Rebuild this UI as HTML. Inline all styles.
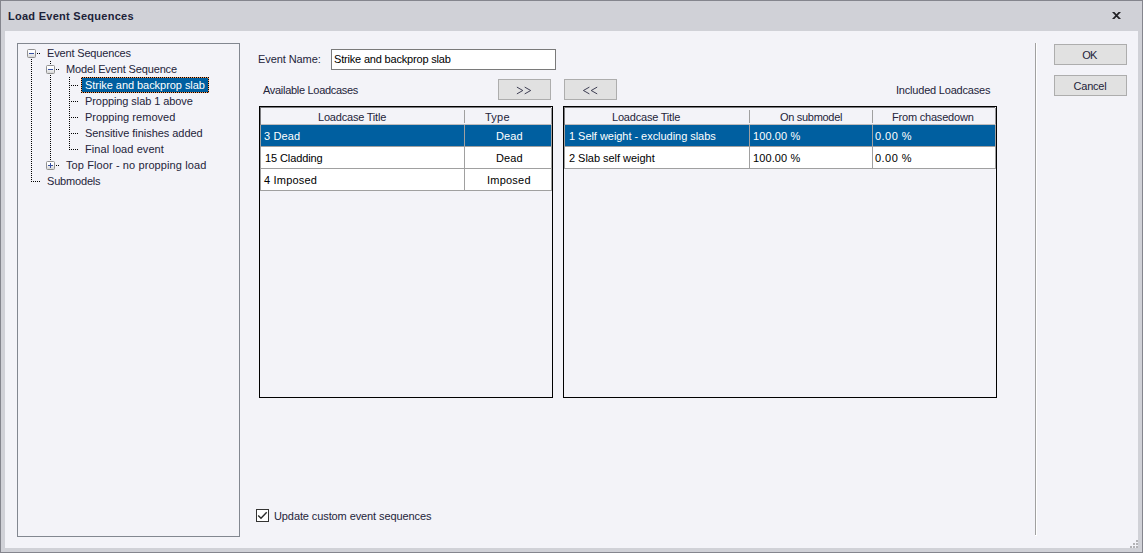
<!DOCTYPE html>
<html>
<head>
<meta charset="utf-8">
<title>Load Event Sequences</title>
<style>
html,body{margin:0;padding:0;}
body{width:1143px;height:553px;overflow:hidden;background:#d0d1d7;position:relative;
  font-family:"Liberation Sans",sans-serif;font-size:11px;line-height:13px;color:#24243a;}
.abs{position:absolute;}
#frame{left:0;top:0;width:1141px;height:551px;border:1px solid #84858d;}
#content{left:5px;top:31px;width:1133px;height:517px;background:#f3f3f8;}
.t{position:absolute;white-space:pre;line-height:13px;height:13px;}
#title{left:8px;top:10px;font-weight:bold;font-size:11px;line-height:13px;height:13px;color:#1c2238;letter-spacing:0.27px;}
#tree{left:17px;top:43px;width:221px;height:492px;border:1px solid #828790;}
.btn{position:absolute;box-sizing:border-box;background:#e1e1e1;border:1px solid #adadad;text-align:center;}
.sel{position:absolute;background:#005fa0;}
.w{color:#fff;}
.hl{position:absolute;height:1px;background:#a0a0a0;}
.vl{position:absolute;width:1px;background:#a0a0a0;}
.row{position:absolute;background:#fff;}
.dv{position:absolute;width:1px;background-image:linear-gradient(to bottom,#000 50%,rgba(0,0,0,0) 50%);background-size:1px 2px;}
.dh{position:absolute;height:1px;background-image:linear-gradient(to right,#000 50%,rgba(0,0,0,0) 50%);background-size:2px 1px;}
.xb{position:absolute;width:7px;height:7px;border:1px solid #919191;border-radius:1.5px;background:linear-gradient(#ffffff 30%,#d6d6d6);}
.xb i{position:absolute;left:1px;top:3px;width:5px;height:1px;background:#3650a2;}
.xb b{position:absolute;left:3px;top:1px;width:1px;height:5px;background:#3650a2;}
</style>
</head>
<body>
<div class="abs" id="frame"></div>
<div class="abs" id="content"></div>

<!-- title bar -->
<div class="t" id="title">Load Event Sequences</div>
<svg class="abs" style="left:1111px;top:11px" width="11" height="10" viewBox="0 0 11 10"><path d="M1 1 L3.4 1 L10 8 L7.6 8 Z M7.6 1 L10 1 L3.4 8 L1 8 Z" fill="#222226"/></svg>

<!-- tree -->
<div class="abs" id="tree"></div>
<!-- dotted connectors -->
<div class="dv" style="left:31px;top:59px;height:123px"></div>
<div class="dh" style="left:37px;top:53px;width:4px"></div>
<div class="dh" style="left:31px;top:181px;width:10px"></div>
<div class="dv" style="left:50px;top:61px;height:4px"></div>
<div class="dv" style="left:50px;top:75px;height:86px"></div>
<div class="dh" style="left:56px;top:69px;width:4px"></div>
<div class="dh" style="left:56px;top:165px;width:4px"></div>
<div class="dv" style="left:69px;top:77px;height:73px"></div>
<div class="dh" style="left:71px;top:85px;width:8px"></div>
<div class="dh" style="left:71px;top:101px;width:8px"></div>
<div class="dh" style="left:71px;top:117px;width:8px"></div>
<div class="dh" style="left:71px;top:133px;width:8px"></div>
<div class="dh" style="left:71px;top:149px;width:8px"></div>
<!-- expand boxes -->
<div class="xb" style="left:27px;top:49px"><i></i></div>
<div class="xb" style="left:46px;top:65px"><i></i></div>
<div class="xb" style="left:46px;top:161px"><i></i><b></b></div>
<!-- selection -->
<div class="sel" style="left:81px;top:77px;width:128px;height:16px;background:repeating-linear-gradient(90deg,#ff9f5f 0 1px,#000 1px 2px) 0 0/100% 1px no-repeat,repeating-linear-gradient(90deg,#000 0 1px,#ff9f5f 1px 2px) 0 100%/100% 1px no-repeat,repeating-linear-gradient(180deg,#ff9f5f 0 1px,#000 1px 2px) 0 0/1px 100% no-repeat,repeating-linear-gradient(180deg,#000 0 1px,#ff9f5f 1px 2px) 100% 0/1px 100% no-repeat,#005fa0"></div>
<!-- tree text -->
<div class="t" style="left:47px;top:47px;letter-spacing:-0.16px">Event Sequences</div>
<div class="t" style="left:66px;top:63px;letter-spacing:-0.14px">Model Event Sequence</div>
<div class="t w" style="left:85px;top:79px;letter-spacing:-0.05px">Strike and backprop slab</div>
<div class="t" style="left:85px;top:95px;letter-spacing:-0.08px">Propping slab 1 above</div>
<div class="t" style="left:85px;top:111px;letter-spacing:0.03px">Propping removed</div>
<div class="t" style="left:85px;top:127px;letter-spacing:-0.04px">Sensitive finishes added</div>
<div class="t" style="left:85px;top:143px;letter-spacing:0.08px">Final load event</div>
<div class="t" style="left:66px;top:159px;letter-spacing:0.1px">Top Floor - no propping load</div>
<div class="t" style="left:47px;top:175px;letter-spacing:-0.18px">Submodels</div>

<!-- event name -->
<div class="t" style="left:258px;top:53px;letter-spacing:-0.08px">Event Name:</div>
<div class="abs" style="left:331px;top:49px;width:223px;height:19px;border:1px solid #7a7a7a;background:#fff"></div>
<div class="t" style="color:#000;left:334px;top:53px;letter-spacing:-0.18px">Strike and backprop slab</div>

<!-- labels + arrow buttons -->
<div class="t" style="left:263px;top:84px;letter-spacing:-0.3px">Available Loadcases</div>
<div class="t" style="left:896px;top:84px;letter-spacing:-0.2px">Included Loadcases</div>
<div class="btn" style="left:498px;top:79px;width:53px;height:21px"></div>
<svg class="abs" style="left:510px;top:82px" width="30" height="17" viewBox="510 82 30 17"><path d="M516.9 87.1 L522.8 90.5 L516.9 93.9 M524.7 87.1 L530.7 90.5 L524.7 93.9" stroke="#2c2c44" stroke-width="0.9" fill="none"/></svg>
<div class="btn" style="left:564px;top:79px;width:53px;height:21px"></div>
<svg class="abs" style="left:576px;top:82px" width="30" height="17" viewBox="576 82 30 17"><path d="M589.4 87.1 L583.4 90.5 L589.4 93.9 M597.2 87.1 L591.2 90.5 L597.2 93.9" stroke="#2c2c44" stroke-width="0.9" fill="none"/></svg>

<!-- table 1 -->
<div class="abs" style="left:259px;top:106px;width:292px;height:290px;border:1px solid #000"></div>
<div class="abs" style="left:260px;top:107px;width:291px;height:1px;background:#7c7c80"></div>
<div class="abs" style="left:260px;top:107px;width:1px;height:18px;background:#7c7c80"></div>
<div class="abs" style="left:260px;top:125px;width:1px;height:66px;background:#a0a0a0"></div>
<div class="abs" style="left:551px;top:108px;width:1px;height:17px;background:#9c9ca0"></div>
<div class="hl" style="left:261px;top:124px;width:291px;background:#c0bcbc"></div>
<div class="vl" style="left:464px;top:110px;height:13px"></div>
<div class="row" style="left:261px;top:125px;width:290px;height:65px"></div>
<div class="sel" style="left:261px;top:125px;width:290px;height:21px"></div>
<div class="hl" style="left:261px;top:146px;width:291px"></div>
<div class="hl" style="left:261px;top:168px;width:291px"></div>
<div class="hl" style="left:261px;top:190px;width:291px"></div>
<div class="vl" style="left:464px;top:125px;height:66px"></div>
<div class="vl" style="left:551px;top:125px;height:66px"></div>
<div class="t" style="left:318px;top:111px;letter-spacing:-0.2px">Loadcase Title</div>
<div class="t" style="left:485px;top:111px;letter-spacing:0.25px">Type</div>
<div class="t w" style="left:264px;top:130px;letter-spacing:0.15px">3 Dead</div>
<div class="t" style="color:#000;left:265px;top:152px;letter-spacing:-0.1px">15 Cladding</div>
<div class="t" style="color:#000;left:264px;top:174px;letter-spacing:0.2px">4 Imposed</div>
<div class="t w" style="left:496px;top:130px;letter-spacing:0.1px">Dead</div>
<div class="t" style="color:#000;left:496px;top:152px;letter-spacing:0.1px">Dead</div>
<div class="t" style="color:#000;left:487px;top:174px;letter-spacing:0.22px">Imposed</div>

<!-- table 2 -->
<div class="abs" style="left:563px;top:106px;width:432px;height:290px;border:1px solid #000"></div>
<div class="abs" style="left:564px;top:107px;width:431px;height:1px;background:#7c7c80"></div>
<div class="abs" style="left:564px;top:107px;width:1px;height:18px;background:#7c7c80"></div>
<div class="abs" style="left:564px;top:125px;width:1px;height:44px;background:#a0a0a0"></div>
<div class="abs" style="left:995px;top:108px;width:1px;height:17px;background:#9c9ca0"></div>
<div class="hl" style="left:565px;top:124px;width:431px;background:#c0bcbc"></div>
<div class="vl" style="left:749px;top:110px;height:13px"></div>
<div class="vl" style="left:872px;top:110px;height:13px"></div>
<div class="row" style="left:565px;top:125px;width:430px;height:43px"></div>
<div class="sel" style="left:565px;top:125px;width:430px;height:21px"></div>
<div class="hl" style="left:565px;top:146px;width:431px"></div>
<div class="hl" style="left:565px;top:168px;width:431px"></div>
<div class="vl" style="left:749px;top:125px;height:44px"></div>
<div class="vl" style="left:872px;top:125px;height:44px"></div>
<div class="vl" style="left:995px;top:125px;height:44px"></div>
<div class="t" style="left:612px;top:111px;letter-spacing:-0.2px">Loadcase Title</div>
<div class="t" style="left:780px;top:111px;letter-spacing:-0.3px">On submodel</div>
<div class="t" style="left:892px;top:111px;letter-spacing:-0.2px">From chasedown</div>
<div class="t w" style="left:569px;top:130px;letter-spacing:-0.04px">1 Self weight - excluding slabs</div>
<div class="t" style="color:#000;left:569px;top:152px;letter-spacing:-0.03px">2 Slab self weight</div>
<div class="t w" style="left:753px;top:130px;letter-spacing:0.1px">100.00 %</div>
<div class="t" style="color:#000;left:753px;top:152px;letter-spacing:0.1px">100.00 %</div>
<div class="t w" style="left:875px;top:130px;letter-spacing:0.45px">0.00 %</div>
<div class="t" style="color:#000;left:875px;top:152px;letter-spacing:0.45px">0.00 %</div>

<!-- checkbox -->
<div class="abs" style="left:256px;top:509px;width:11px;height:11px;border:1px solid #333;background:#fff"></div>
<svg class="abs" style="left:256px;top:509px" width="13" height="13" viewBox="0 0 13 13"><path d="M2.2 6.4 L5 9.2 L10.7 3.3" stroke="#2b2b2b" stroke-width="1.4" fill="none"/></svg>
<div class="t" style="left:274px;top:510px;letter-spacing:-0.1px">Update custom event sequences</div>

<!-- separator + OK/Cancel -->
<div class="vl" style="left:1035px;top:43px;height:492px;background:#a0a0a0"></div>
<div class="vl" style="left:1036px;top:43px;height:493px;background:#ffffff"></div>
<div class="hl" style="left:1035px;top:535px;width:2px;background:#ffffff"></div>
<div class="btn" style="left:1054px;top:44px;width:73px;height:21px"></div>
<div class="t" style="left:1054px;top:49px;width:71px;text-align:center;letter-spacing:-0.6px">OK</div>
<div class="btn" style="left:1054px;top:75px;width:73px;height:21px"></div>
<div class="t" style="left:1054px;top:80px;width:72px;text-align:center;letter-spacing:-0.2px">Cancel</div>

<!-- resize grip -->
<svg class="abs" style="left:1128px;top:538px" width="10" height="10" viewBox="0 0 10 10" shape-rendering="crispEdges"><g fill="#b3b3b6"><rect x="8" y="2" width="2" height="2"/><rect x="5" y="5" width="2" height="2"/><rect x="8" y="5" width="2" height="2"/><rect x="2" y="8" width="2" height="2"/><rect x="5" y="8" width="2" height="2"/><rect x="8" y="8" width="2" height="2"/></g></svg>
</body>
</html>
